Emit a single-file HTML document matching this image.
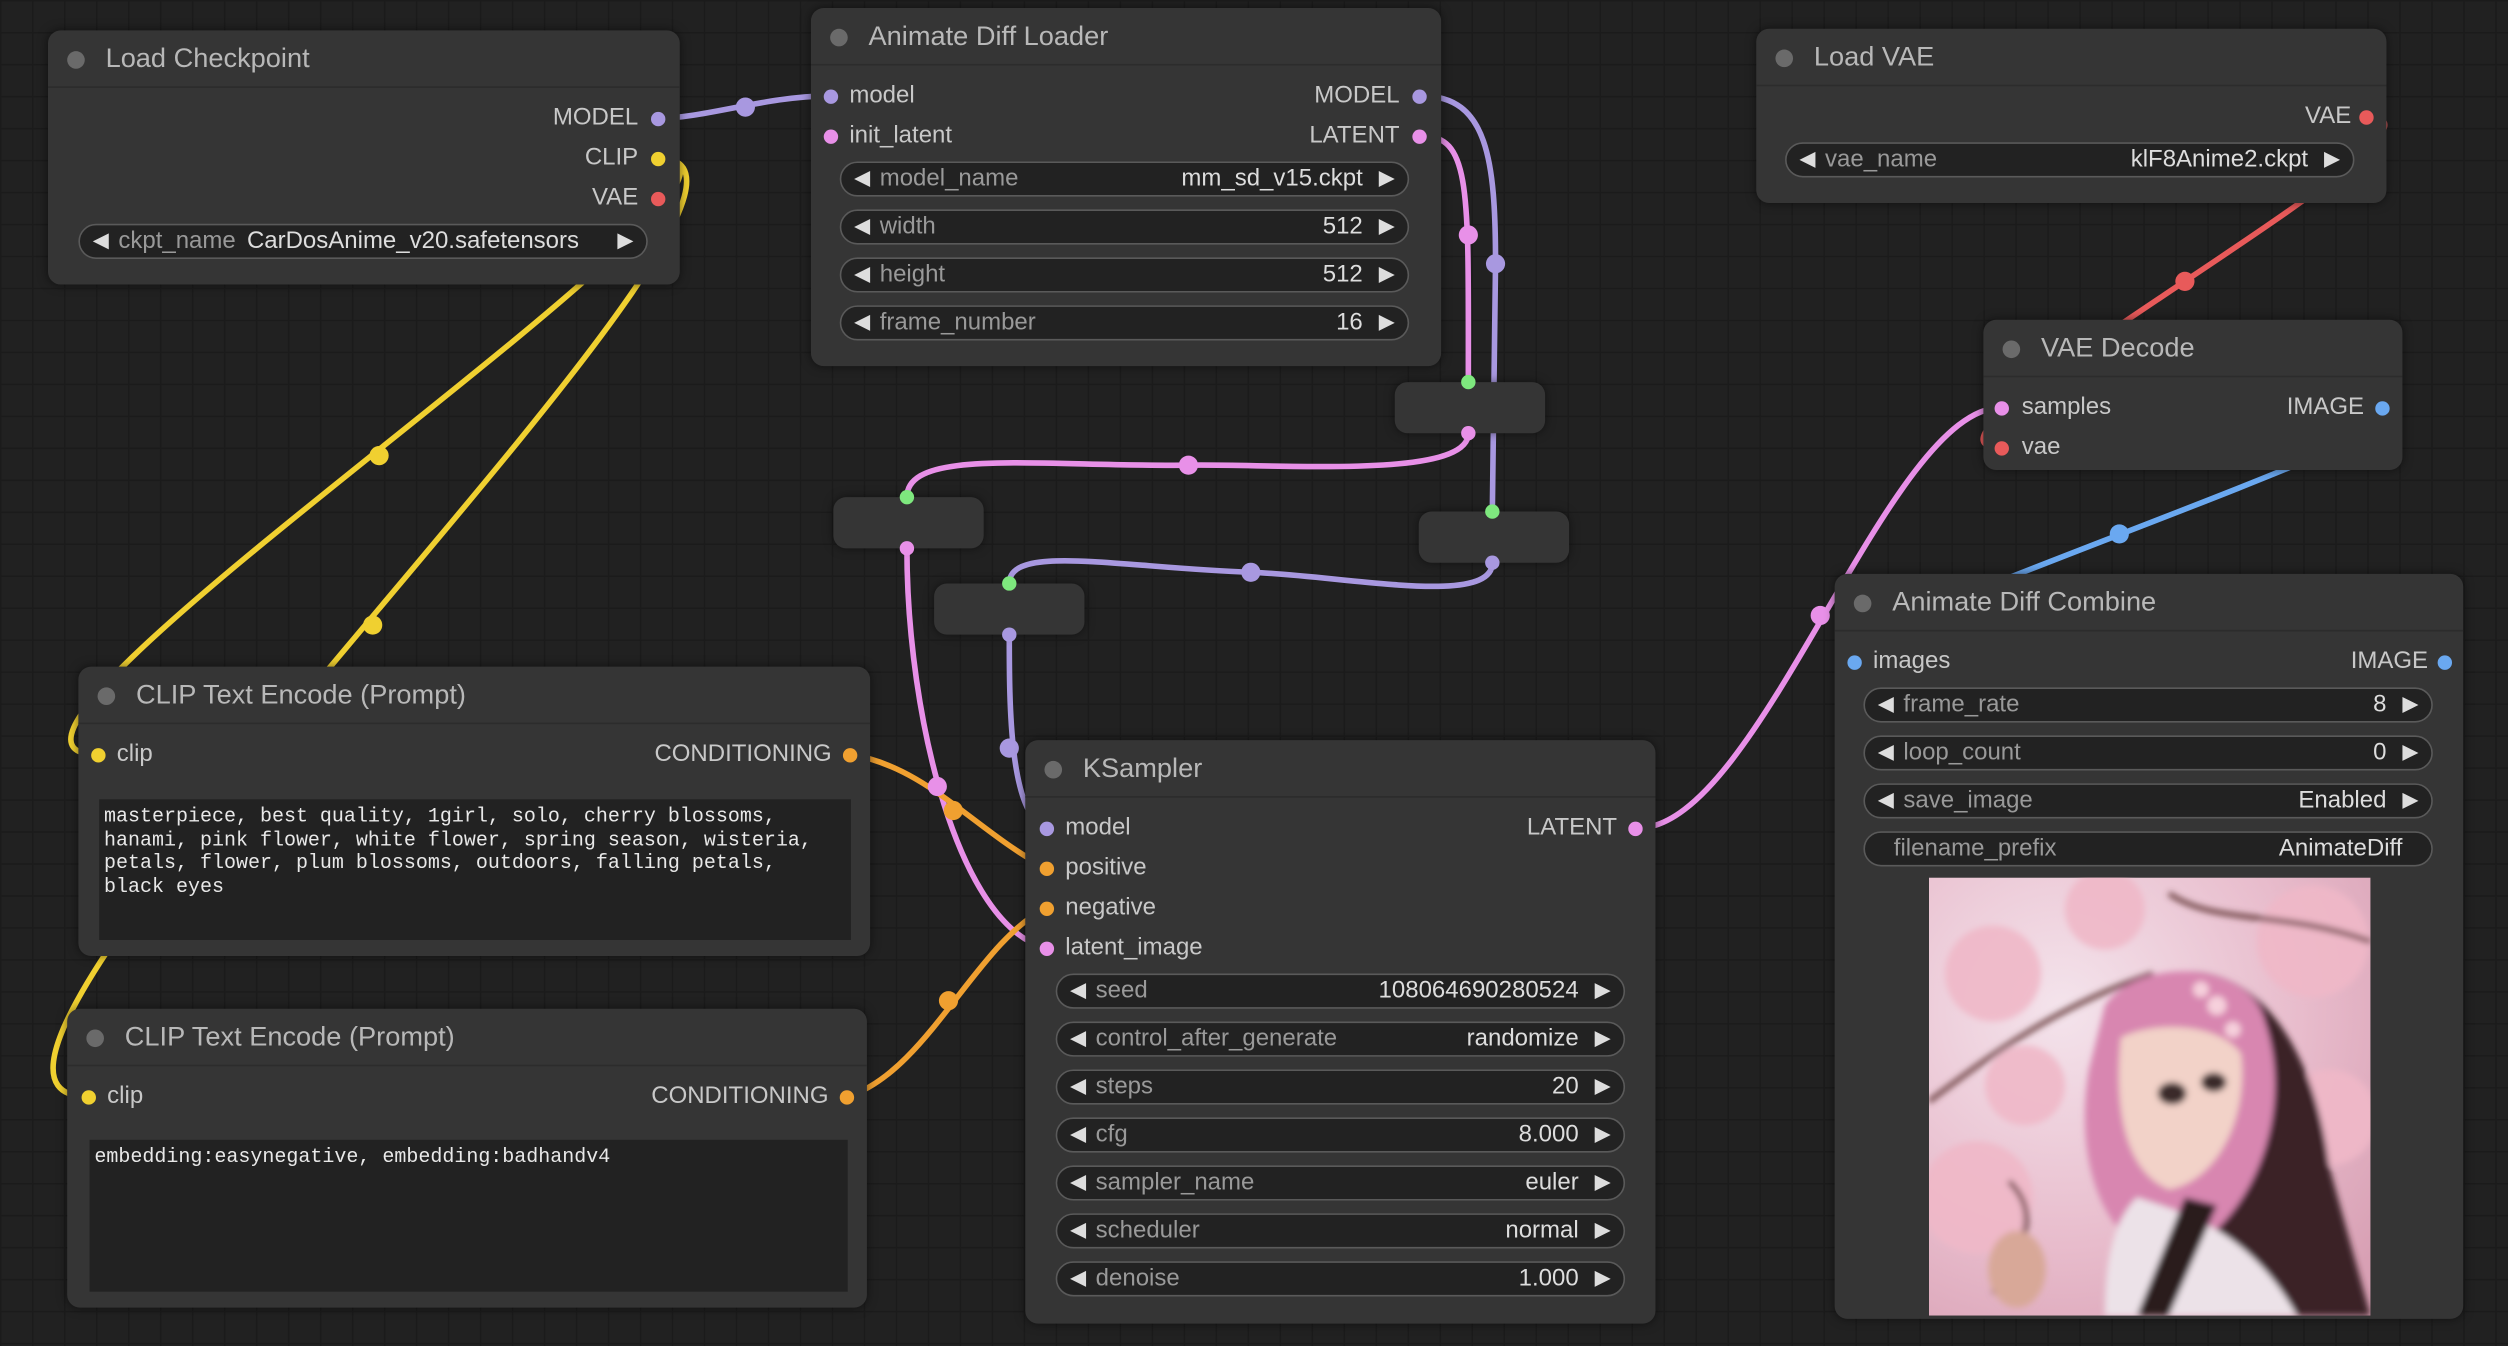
<!DOCTYPE html>
<html><head><meta charset="utf-8"><style>
*{margin:0;padding:0;box-sizing:border-box}
html,body{width:2508px;height:1346px;overflow:hidden;background:#212121}
#c{position:absolute;left:0;top:0;width:1568px;height:842px;transform:scale(1.5995,1.5986);transform-origin:0 0;
background-color:#212121;
background-image:linear-gradient(#1b1b1b 1px,transparent 1px),linear-gradient(90deg,#1b1b1b 1px,transparent 1px);
background-size:20px 20px;font-family:"Liberation Sans",sans-serif}
.n{position:absolute;background:#353535;border-radius:8px;box-shadow:0 0 6px rgba(0,0,0,.5)}
.t{height:36px;border-bottom:1px solid #2c2c2c;color:#b8b8b8;font-size:17px;line-height:36px;padding-left:36px;position:relative}
.t:before{content:"";position:absolute;left:12px;top:13px;width:11px;height:11px;border-radius:50%;background:#6a6a6a}
.s{position:absolute;font-size:15px;color:#c8c8c8;line-height:18px}
.d{position:absolute;width:9px;height:9px;border-radius:50%}
.w{position:absolute;height:22px;border-radius:11px;background:#222;border:1px solid #5a5a5a;font-size:15px;line-height:20px;color:#999}
.w .l{position:absolute;left:24px}
.w .v{position:absolute;right:28px;color:#ddd}
.w:before{content:"";position:absolute;left:8px;top:5px;border-right:10px solid #ddd;border-top:5px solid transparent;border-bottom:5px solid transparent}
.w:after{content:"";position:absolute;right:8px;top:5px;border-left:10px solid #ddd;border-top:5px solid transparent;border-bottom:5px solid transparent}
.w.nb:before,.w.nb:after{display:none}
.ta{position:absolute;background:#222;font-family:"Liberation Mono",monospace;font-size:12.5px;color:#e8e8e8;padding:4px 3px;line-height:14.5px;white-space:pre}
.r{position:absolute;background:#353535;border-radius:8px;width:94px;height:32px;box-shadow:0 0 6px rgba(0,0,0,.5)}
svg{position:absolute;left:0;top:0}
</style></head><body><div id="c">

<svg width="1568" height="842" style="z-index:0">
<g fill="none" stroke-width="3.5">
<path d="M412,74 C440,74 480,60 518,60" stroke="#a898e0"/>
<path d="M412,99 C520,99 -60,472 61,472" stroke="#f0d030"/>
<path d="M412,99 C540,99 -90,686 55,686" stroke="#f0d030"/>
<path d="M1480,73 C1560,73 1170,280 1251,280" stroke="#e85a5a"/>
<path d="M1490,255 C1570,255 1080,414 1159,414" stroke="#6aa8f0"/>
<path d="M1024,518 C1100,518 1180,255 1251,255" stroke="#e890e8"/>
<path d="M889,85 C920,85 918,120 918,239" stroke="#e890e8"/>
<path d="M918,271 C918,300 800,290 743,291 C650,292 567,280 567,311" stroke="#e890e8"/>
<path d="M567,343 C567,450 600,580 654,593" stroke="#e890e8"/>
<path d="M889,60 C930,60 935,100 935,165 L933,320" stroke="#a898e0"/>
<path d="M933,352 C933,380 840,360 782,358 C700,355 631,340 631,365" stroke="#a898e0"/>
<path d="M631,397 C631,440 631,510 654,518" stroke="#a898e0"/>
<path d="M532,472 C580,480 610,520 654,543" stroke="#f0a030"/>
<path d="M530,686 C580,670 610,590 654,568" stroke="#f0a030"/>
</g>
<g>
<circle cx="466" cy="67" r="6" fill="#a898e0"/>
<circle cx="237" cy="285" r="6" fill="#f0d030"/>
<circle cx="233" cy="391" r="6" fill="#f0d030"/>
<circle cx="1366" cy="176" r="6" fill="#e85a5a"/>
<circle cx="1325" cy="334" r="6" fill="#6aa8f0"/>
<circle cx="1138" cy="385" r="6" fill="#e890e8"/>
<circle cx="918" cy="147" r="6" fill="#e890e8"/>
<circle cx="743" cy="291" r="6" fill="#e890e8"/>
<circle cx="586" cy="492" r="6" fill="#e890e8"/>
<circle cx="935" cy="165" r="6" fill="#a898e0"/>
<circle cx="782" cy="358" r="6" fill="#a898e0"/>
<circle cx="631" cy="468" r="6" fill="#a898e0"/>
<circle cx="596" cy="507" r="6" fill="#f0a030"/>
<circle cx="593" cy="626" r="6" fill="#f0a030"/>
</g>
</svg>

<div class="r" style="left:872px;top:239px"></div>
<div class="r" style="left:521px;top:311px"></div>
<div class="r" style="left:584px;top:365px"></div>
<div class="r" style="left:887px;top:320px"></div>
<svg width="1568" height="842" style="z-index:1">
<circle cx="918" cy="239" r="4.5" fill="#7ee87e"/><circle cx="918" cy="271" r="4.5" fill="#e890e8"/>
<circle cx="567" cy="311" r="4.5" fill="#7ee87e"/><circle cx="567" cy="343" r="4.5" fill="#e890e8"/>
<circle cx="631" cy="365" r="4.5" fill="#7ee87e"/><circle cx="631" cy="397" r="4.5" fill="#a898e0"/>
<circle cx="933" cy="320" r="4.5" fill="#7ee87e"/><circle cx="933" cy="352" r="4.5" fill="#a898e0"/>
</svg>

<!-- Load Checkpoint -->
<div class="n" style="left:30px;top:19px;width:395px;height:159px;z-index:2">
<div class="t">Load Checkpoint</div>
<div class="s" style="right:26px;top:46px">MODEL</div><div class="d" style="right:9px;top:51px;background:#a898e0"></div>
<div class="s" style="right:26px;top:71px">CLIP</div><div class="d" style="right:9px;top:76px;background:#f0d030"></div>
<div class="s" style="right:26px;top:96px">VAE</div><div class="d" style="right:9px;top:101px;background:#e85a5a"></div>
<div class="w" style="left:19px;top:121px;width:356px"><span class="l">ckpt_name</span><span class="v" style="right:42px">CarDosAnime_v20.safetensors</span></div>
</div>

<!-- Animate Diff Loader -->
<div class="n" style="left:507px;top:5px;width:394px;height:224px;z-index:2">
<div class="t">Animate Diff Loader</div>
<div class="d" style="left:8px;top:51px;background:#a898e0"></div><div class="s" style="left:24px;top:46px">model</div>
<div class="d" style="left:8px;top:76px;background:#e890e8"></div><div class="s" style="left:24px;top:71px">init_latent</div>
<div class="s" style="right:26px;top:46px">MODEL</div><div class="d" style="right:9px;top:51px;background:#a898e0"></div>
<div class="s" style="right:26px;top:71px">LATENT</div><div class="d" style="right:9px;top:76px;background:#e890e8"></div>
<div class="w" style="left:18px;top:96px;width:356px"><span class="l">model_name</span><span class="v">mm_sd_v15.ckpt</span></div>
<div class="w" style="left:18px;top:126px;width:356px"><span class="l">width</span><span class="v">512</span></div>
<div class="w" style="left:18px;top:156px;width:356px"><span class="l">height</span><span class="v">512</span></div>
<div class="w" style="left:18px;top:186px;width:356px"><span class="l">frame_number</span><span class="v">16</span></div>
</div>

<!-- Load VAE -->
<div class="n" style="left:1098px;top:18px;width:394px;height:109px;z-index:2">
<div class="t">Load VAE</div>
<div class="s" style="right:22px;top:46px">VAE</div><div class="d" style="right:8px;top:51px;background:#e85a5a"></div>
<div class="w" style="left:18px;top:71px;width:356px"><span class="l">vae_name</span><span class="v">klF8Anime2.ckpt</span></div>
</div>

<!-- VAE Decode -->
<div class="n" style="left:1240px;top:200px;width:262px;height:94px;z-index:2">
<div class="t">VAE Decode</div>
<div class="d" style="left:7px;top:51px;background:#e890e8"></div><div class="s" style="left:24px;top:46px">samples</div>
<div class="d" style="left:7px;top:76px;background:#e85a5a"></div><div class="s" style="left:24px;top:71px">vae</div>
<div class="s" style="right:24px;top:46px">IMAGE</div><div class="d" style="right:8px;top:51px;background:#6aa8f0"></div>
</div>

<!-- Animate Diff Combine -->
<div class="n" style="left:1147px;top:359px;width:393px;height:466px;z-index:2">
<div class="t">Animate Diff Combine</div>
<div class="d" style="left:8px;top:51px;background:#6aa8f0"></div><div class="s" style="left:24px;top:46px">images</div>
<div class="s" style="right:22px;top:46px">IMAGE</div><div class="d" style="right:7px;top:51px;background:#6aa8f0"></div>
<div class="w" style="left:18px;top:71px;width:356px"><span class="l">frame_rate</span><span class="v">8</span></div>
<div class="w" style="left:18px;top:101px;width:356px"><span class="l">loop_count</span><span class="v">0</span></div>
<div class="w" style="left:18px;top:131px;width:356px"><span class="l">save_image</span><span class="v">Enabled</span></div>
<div class="w nb" style="left:18px;top:161px;width:356px"><span class="l" style="left:18px">filename_prefix</span><span class="v" style="right:18px">AnimateDiff</span></div>
<svg style="left:59px;top:190px" width="276" height="274" viewBox="0 0 276 274">
<defs><radialGradient id="bg" cx="0.3" cy="0.3" r="0.9"><stop offset="0" stop-color="#f4e4ec"/><stop offset="0.6" stop-color="#e8bccc"/><stop offset="1" stop-color="#d8a0b4"/></radialGradient>
<filter id="bl"><feGaussianBlur stdDeviation="2"/></filter></defs>
<rect width="276" height="274" fill="url(#bg)"/>
<g filter="url(#bl)">
<g fill="#f0b8c8" opacity="0.9"><circle cx="40" cy="60" r="30"/><circle cx="30" cy="200" r="35"/><circle cx="240" cy="40" r="35"/><circle cx="250" cy="150" r="30"/><circle cx="110" cy="20" r="25"/><circle cx="60" cy="130" r="25"/></g>
<g stroke="#6a4040" stroke-width="3" fill="none"><path d="M0,140 C40,110 80,80 140,60"/><path d="M150,10 C180,30 220,20 276,40"/><path d="M40,260 C60,230 70,210 50,190"/></g>
<path d="M150,60 C200,50 240,100 250,180 L276,274 L180,274 Z" fill="#3a2428"/>
<path d="M110,80 C130,50 200,50 210,90 C230,150 200,220 150,240 C110,230 90,180 100,120 Z" fill="#d886b0"/>
<path d="M120,100 C140,90 180,90 195,110 C200,150 180,190 150,195 C125,185 115,150 120,100 Z" fill="#f2d2c8"/>
<ellipse cx="152" cy="135" rx="9" ry="7" fill="#3a2a2a"/><ellipse cx="178" cy="128" rx="8" ry="6" fill="#3a2a2a"/>
<path d="M130,200 C160,210 200,220 230,274 L110,274 C110,240 115,215 130,200 Z" fill="#ece2e8"/>
<path d="M160,200 L180,205 L150,274 L130,274 Z" fill="#2a1c1e"/>
<ellipse cx="55" cy="245" rx="18" ry="24" fill="#d8a898"/>
<g fill="#f6d0dc"><circle cx="180" cy="80" r="6"/><circle cx="190" cy="95" r="5"/><circle cx="170" cy="70" r="5"/></g>
</g>
</svg>
</div>

<!-- CLIP Text Encode 1 -->
<div class="n" style="left:49px;top:417px;width:495px;height:181px;z-index:2">
<div class="t">CLIP Text Encode (Prompt)</div>
<div class="d" style="left:8px;top:51px;background:#f0d030"></div><div class="s" style="left:24px;top:46px">clip</div>
<div class="s" style="right:24px;top:46px">CONDITIONING</div><div class="d" style="right:8px;top:51px;background:#f0a030"></div>
<div class="ta" style="left:13px;top:83px;width:470px;height:88px">masterpiece, best quality, 1girl, solo, cherry blossoms,
hanami, pink flower, white flower, spring season, wisteria,
petals, flower, plum blossoms, outdoors, falling petals,
black eyes</div>
</div>

<!-- CLIP Text Encode 2 -->
<div class="n" style="left:42px;top:631px;width:500px;height:187px;z-index:2">
<div class="t">CLIP Text Encode (Prompt)</div>
<div class="d" style="left:9px;top:51px;background:#f0d030"></div><div class="s" style="left:25px;top:46px">clip</div>
<div class="s" style="right:24px;top:46px">CONDITIONING</div><div class="d" style="right:8px;top:51px;background:#f0a030"></div>
<div class="ta" style="left:14px;top:82px;width:474px;height:95px">embedding:easynegative, embedding:badhandv4</div>
</div>

<!-- KSampler -->
<div class="n" style="left:641px;top:463px;width:394px;height:365px;z-index:2">
<div class="t">KSampler</div>
<div class="d" style="left:9px;top:51px;background:#a898e0"></div><div class="s" style="left:25px;top:46px">model</div>
<div class="d" style="left:9px;top:76px;background:#f0a030"></div><div class="s" style="left:25px;top:71px">positive</div>
<div class="d" style="left:9px;top:101px;background:#f0a030"></div><div class="s" style="left:25px;top:96px">negative</div>
<div class="d" style="left:9px;top:126px;background:#e890e8"></div><div class="s" style="left:25px;top:121px">latent_image</div>
<div class="s" style="right:24px;top:46px">LATENT</div><div class="d" style="right:8px;top:51px;background:#e890e8"></div>
<div class="w" style="left:19px;top:146px;width:356px"><span class="l">seed</span><span class="v">108064690280524</span></div>
<div class="w" style="left:19px;top:176px;width:356px"><span class="l">control_after_generate</span><span class="v">randomize</span></div>
<div class="w" style="left:19px;top:206px;width:356px"><span class="l">steps</span><span class="v">20</span></div>
<div class="w" style="left:19px;top:236px;width:356px"><span class="l">cfg</span><span class="v">8.000</span></div>
<div class="w" style="left:19px;top:266px;width:356px"><span class="l">sampler_name</span><span class="v">euler</span></div>
<div class="w" style="left:19px;top:296px;width:356px"><span class="l">scheduler</span><span class="v">normal</span></div>
<div class="w" style="left:19px;top:326px;width:356px"><span class="l">denoise</span><span class="v">1.000</span></div>
</div>

</div></body></html>
